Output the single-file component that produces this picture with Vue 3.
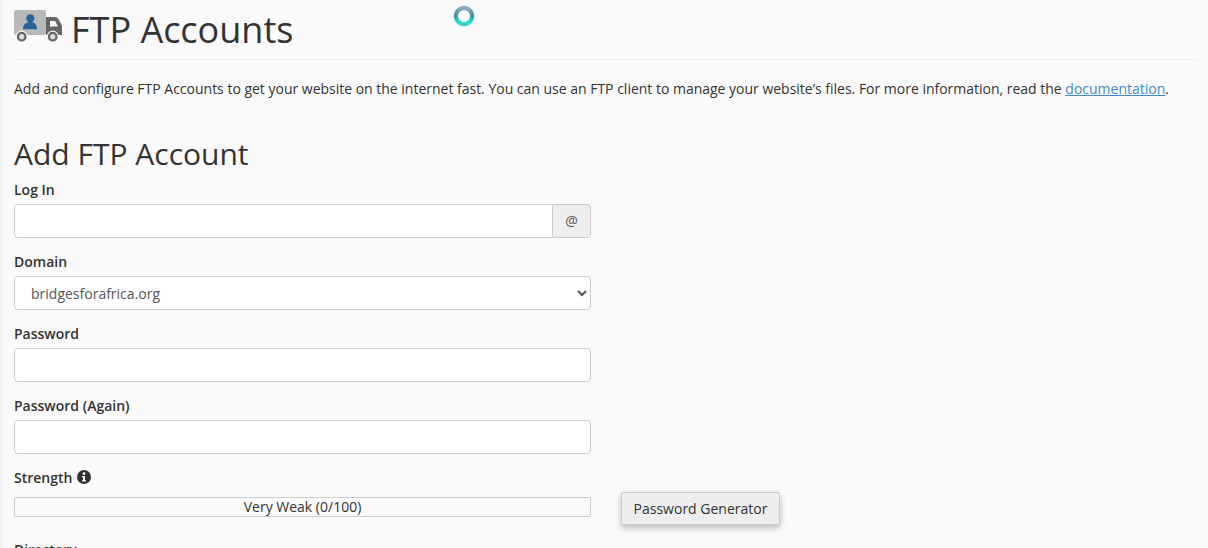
<template>
  <main class="page">
    <svg class="spinner" width="22" height="22" viewBox="0 0 22 22">
      <defs>
        <linearGradient id="spin" x1="0" y1="0" x2="0" y2="1">
          <stop offset="0" stop-color="#8fabc8" />
          <stop offset="0.5" stop-color="#3f8f9f" />
          <stop offset="0.8" stop-color="#1fdccf" />
          <stop offset="1" stop-color="#3fd0cc" />
        </linearGradient>
      </defs>
      <circle cx="11" cy="11" r="8.200" fill="#fff" stroke="url(#spin)" stroke-width="4.200" />
    </svg>
    <header class="page-header">
      <svg class="page-icon" width="50" height="34" viewBox="0 0 50 34">
        <rect x="0" y="0" width="32" height="25" rx="2" fill="#b9b9b9" />
        <circle cx="16.300" cy="8.300" r="4" fill="#2a6496" />
        <path d="M9 19.300c0-5 3-7.300 7.300-7.300s6.700 2.300 6.700 7.300z" fill="#2a6496" />
        <path d="M32 7h8.500c2 0 3 .8 4 2.300l2.700 4.700c.6 1 .8 2 .8 3V25H32z" fill="#666" />
        <path d="M36 11h5l3 5.500h-8z" fill="#fafafa" />
        <circle cx="7.700" cy="26.700" r="5.500" fill="#666" stroke="#fafafa" stroke-width="1.200" />
        <circle cx="7.700" cy="26.700" r="2.600" fill="#ddd" />
        <circle cx="38.700" cy="26.700" r="5.500" fill="#666" stroke="#fafafa" stroke-width="1.200" />
        <circle cx="38.700" cy="26.700" r="2.600" fill="#ddd" />
      </svg>
      <h1>FTP Accounts</h1>
    </header>

    <p class="intro">
      Add and configure FTP Accounts to get your website on the internet fast. You can use an FTP client to manage your website’s files. For more information, read the <a href="#">documentation</a>.
    </p>

    <h2>Add FTP Account</h2>

    <form class="ftp-form" @submit.prevent>
      <div class="field">
        <label>Log In</label>
        <div class="input-group">
          <input type="text" />
          <span class="addon">@</span>
        </div>
      </div>
      <div class="field">
        <label>Domain</label>
        <select>
          <option>bridgesforafrica.org</option>
        </select>
      </div>
      <div class="field">
        <label>Password</label>
        <input type="password" />
      </div>
      <div class="field">
        <label>Password (Again)</label>
        <input type="password" />
      </div>
      <div class="strength">
        <div class="strength-main">
          <label class="strength-label">
            Strength
            <svg class="info" width="14" height="14" viewBox="0 0 14 14">
              <circle cx="7" cy="7" r="7" fill="#333" />
              <circle cx="7" cy="3.600" r="1.400" fill="#fafafa" />
              <path d="M5 6h3v4.200h1V11.500H5v-1.300h1V7.300H5z" fill="#fafafa" />
            </svg>
          </label>
          <div class="meter">Very Weak (0/100)</div>
        </div>
        <button type="button">Password Generator</button>
      </div>
      <div class="field">
        <label>Directory</label>
      </div>
    </form>
  </main>
</template>

<script setup>
</script>

<style>
html, body {
  margin: 0;
  height: 100%;
  overflow: hidden;
  background: #fafafa;
}
</style>

<style scoped>
.page {
  position: relative;
  box-sizing: border-box;
  height: 548px;
  overflow: hidden;
  padding: 0 11px 0 14px;
  background: linear-gradient(to right, #f0f0f0, #fafafa 5px);
  font-family: "Open Sans", sans-serif;
  font-size: 14px;
  color: #333;
}

.spinner {
  position: absolute;
  left: 452.800px;
  top: 5px;
}

.page-header {
  display: flex;
  align-items: flex-start;
  height: 59px;
  border-bottom: 1px solid #eee;
}

.page-icon {
  margin-top: 10px;
  flex: none;
}

h1 {
  margin: 5px 0 0 7px;
  font-size: 36px;
  font-weight: 400;
  line-height: 50px;
  letter-spacing: -0.01px;
  color: #333;
}

.intro {
  margin: 19px 0 0;
  line-height: 20px;
  letter-spacing: -0.01px;
}

.intro a {
  color: #428bca;
}

h2 {
  margin: 34px 0 0;
  font-size: 30px;
  font-weight: 400;
  line-height: 42px;
  color: #333;
}

.ftp-form {
  width: 766px;
  margin-top: 4px;
}

.field {
  width: 577px;
  margin-bottom: 13px;
}

label {
  display: block;
  height: 20px;
  padding-top: 1px;
  line-height: 20px;
  margin-bottom: 4px;
  font-weight: 600;
}

input,
select {
  display: block;
  box-sizing: border-box;
  width: 100%;
  height: 34px;
  padding: 6px 12px;
  border: 1px solid #ccc;
  border-radius: 4px;
  background: #fff;
  font-family: inherit;
  font-size: 14px;
  color: #555;
}

.input-group {
  display: flex;
}

.input-group input {
  flex: 1;
  min-width: 0;
  border-radius: 4px 0 0 4px;
}

.addon {
  box-sizing: border-box;
  width: 38px;
  height: 34px;
  line-height: 32px;
  text-align: center;
  border: 1px solid #ccc;
  border-left: 0;
  border-radius: 0 4px 4px 0;
  background: #eee;
  color: #555;
}

.strength {
  display: flex;
  align-items: flex-end;
  gap: 30px;
  margin-top: 13px;
  margin-bottom: 22px;
}

.strength-main {
  width: 577px;
  flex: none;
}

.strength-label {
  margin-bottom: 9px;
}

.info {
  vertical-align: -1px;
  margin-left: 1px;
}

.meter {
  box-sizing: border-box;
  height: 20px;
  line-height: 18px;
  text-align: center;
  border: 1px solid #ccc;
  border-radius: 2px;
}

button {
  flex: none;
  width: 159px;
  height: 33px;
  margin-bottom: -8px;
  border: 1px solid #ccc;
  border-radius: 2px;
  background: #eee;
  box-shadow: 0 3px 6px rgba(0, 0, 0, 0.25);
  font-family: inherit;
  font-size: 14px;
  color: #333;
}
</style>
